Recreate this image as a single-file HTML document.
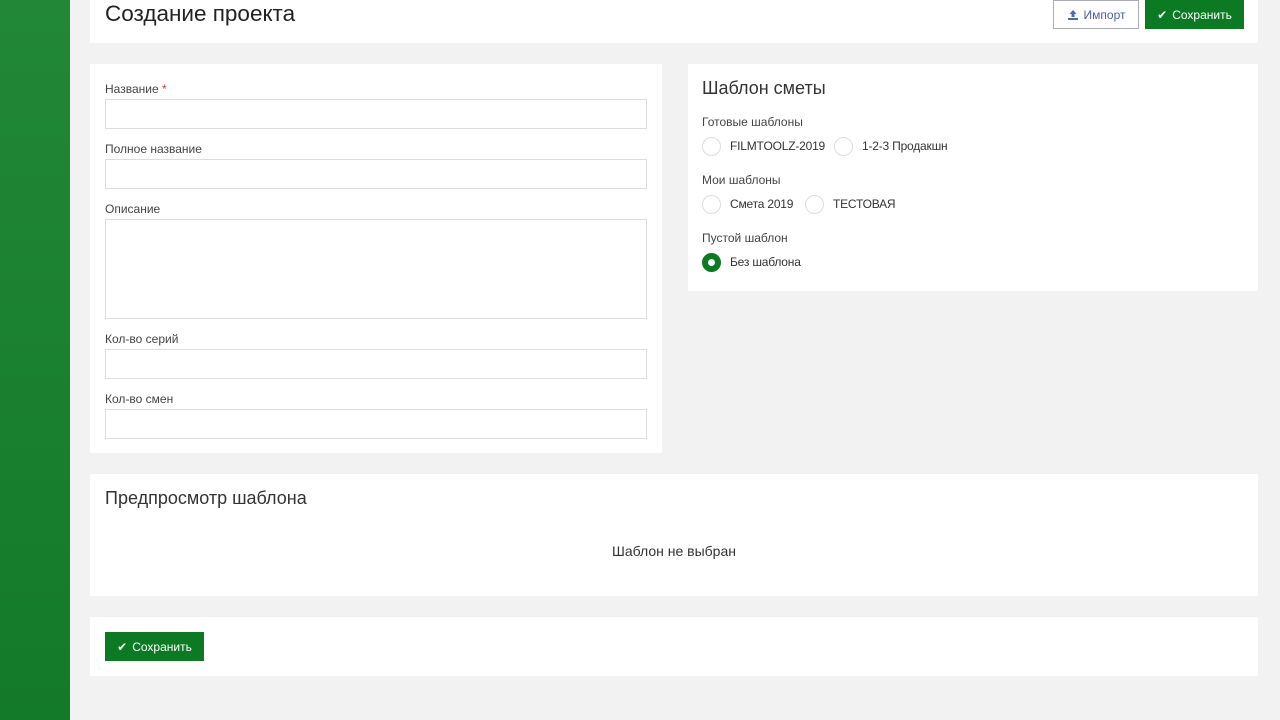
<!DOCTYPE html>
<html><head><meta charset="utf-8"><style>
*{box-sizing:border-box;margin:0;padding:0}
body{width:1280px;height:720px;overflow:hidden;background:#f2f2f2;font-family:"Liberation Sans",sans-serif;color:#333;position:relative}
.side{position:absolute;left:0;top:0;width:70px;height:720px;background:linear-gradient(#228838,#137a2a)}
.card{position:absolute;background:#fff}
.lbl{position:absolute;font-size:12px;color:#444}
.inp{position:absolute;border:1px solid #ddd;background:#fff}
.h{position:absolute;font-size:18px;color:#333}
.r{position:absolute;width:19px;height:19px;border:1px solid #ddd;border-radius:50%;background:#fff}
.rt{position:absolute;font-size:12px;color:#333;letter-spacing:-0.2px}
.btn{position:absolute;height:29px;font-size:12px;display:flex;align-items:center;justify-content:center}
</style></head><body>
<div class="side"></div>
<div class="card" style="left:90px;top:0;width:1168px;height:43px"></div>
<div style="position:absolute;left:105px;top:1px;font-size:22.5px;color:#222">Создание проекта</div>
<div class="btn" style="left:1053px;top:0;width:86px;border:1px solid #aab;color:#4a5ea8;background:#fff"><svg width="12" height="12" viewBox="0 0 12 12" style="margin-right:5px"><path d="M6 1 L2.5 5 H4.5 V8 H7.5 V5 H9.5 Z M1 9 H11 V11 H1 Z" fill="#4a6ab8"/></svg>Импорт</div>
<div class="btn" style="left:1145px;top:0;width:99px;background:#0b7a22;color:#fff"><span style="margin-right:5px">✔</span>Сохранить</div>

<div class="card" style="left:90px;top:64px;width:572px;height:389px"></div>
<div class="lbl" style="left:105px;top:82px">Название <span style="color:#c33">*</span></div>
<div class="inp" style="left:105px;top:99px;width:542px;height:30px"></div>
<div class="lbl" style="left:105px;top:142px">Полное название</div>
<div class="inp" style="left:105px;top:159px;width:542px;height:30px"></div>
<div class="lbl" style="left:105px;top:202px">Описание</div>
<div class="inp" style="left:105px;top:219px;width:542px;height:100px"></div>
<div class="lbl" style="left:105px;top:332px">Кол-во серий</div>
<div class="inp" style="left:105px;top:349px;width:542px;height:30px"></div>
<div class="lbl" style="left:105px;top:392px">Кол-во смен</div>
<div class="inp" style="left:105px;top:409px;width:542px;height:30px"></div>

<div class="card" style="left:688px;top:64px;width:570px;height:227px"></div>
<div class="h" style="left:702px;top:78px">Шаблон сметы</div>
<div class="lbl" style="left:702px;top:115px">Готовые шаблоны</div>
<div class="r" style="left:702px;top:137px"></div><div class="rt" style="left:730px;top:139px">FILMTOOLZ-2019</div>
<div class="r" style="left:834px;top:137px"></div><div class="rt" style="left:862px;top:139px">1-2-3 Продакшн</div>
<div class="lbl" style="left:702px;top:173px">Мои шаблоны</div>
<div class="r" style="left:702px;top:195px"></div><div class="rt" style="left:730px;top:197px">Смета 2019</div>
<div class="r" style="left:805px;top:195px"></div><div class="rt" style="left:833px;top:197px">ТЕСТОВАЯ</div>
<div class="lbl" style="left:702px;top:231px">Пустой шаблон</div>
<div class="r" style="left:702px;top:253px;border:6px solid #0b7a22"></div><div class="rt" style="left:730px;top:255px">Без шаблона</div>

<div class="card" style="left:90px;top:474px;width:1168px;height:122px"></div>
<div class="h" style="left:105px;top:488px">Предпросмотр шаблона</div>
<div style="position:absolute;left:0;width:1348px;top:543px;text-align:center;font-size:14px;color:#333">Шаблон не выбран</div>

<div class="card" style="left:90px;top:617px;width:1168px;height:59px"></div>
<div class="btn" style="left:105px;top:632px;width:99px;background:#0b7a22;color:#fff"><span style="margin-right:5px">✔</span>Сохранить</div>
</body></html>
